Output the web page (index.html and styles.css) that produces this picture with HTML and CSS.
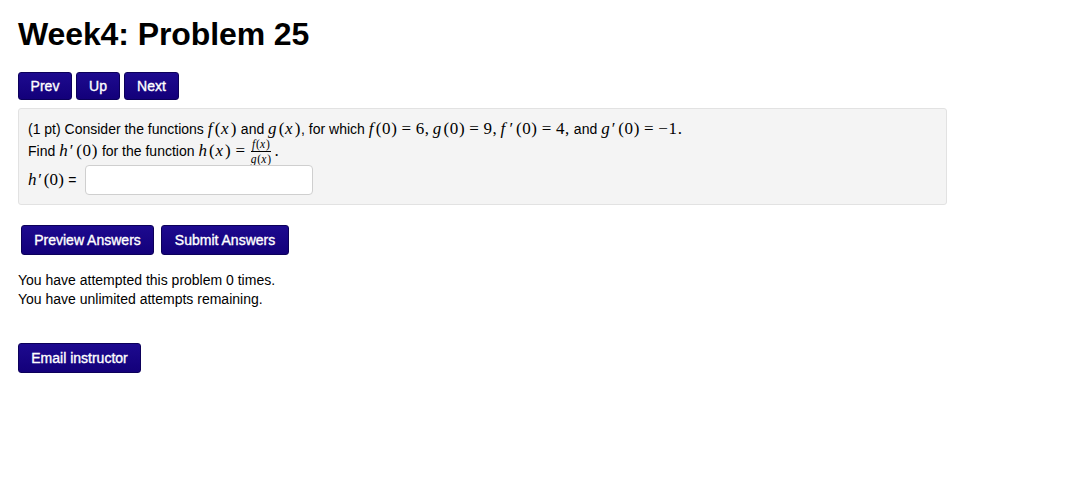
FILE: index.html
```html
<!DOCTYPE html>
<html>
<head>
<meta charset="utf-8">
<link rel="stylesheet" href="styles.css">
</head>
<body>
<div class="page">
  <h1 class="title">Week4: Problem 25</h1>
  <div class="nav">
    <a class="btn">Prev</a>
    <a class="btn">Up</a>
    <a class="btn">Next</a>
  </div>
  <div class="problem">
    <div class="line">(1 pt) Consider the functions <span class="m"><i>f</i>(<i>x</i>)</span> and <span class="m"><i>g</i>(<i>x</i>)</span>, for which <span class="m"><i>f</i>(0)<span class="rel">=</span>6,<span class="sp"></span><i>g</i>(0)<span class="rel">=</span>9,<span class="sp"></span><i>f</i>&#8202;′&#8202;(0)<span class="rel">=</span>4,</span> and <span class="m"><i>g</i>′&#8202;(0)<span class="rel">=</span>−1.</span></div>
    <div class="line">Find <span class="m"><i>h</i>′&#8202;(0)</span> for the function <span class="m"><i>h</i>(<i>x</i>)<span class="rel">=</span><span class="frac"><span class="num"><i>f</i>(<i>x</i>)</span><span class="den"><i>g</i>(<i>x</i>)</span></span>.</span></div>
    <div class="answer"><span class="m am"><i>h</i>′&#8202;(0)</span><span class="eq">=</span><span class="input"></span></div>
  </div>
  <div class="actions">
    <a class="btn btn-lg">Preview Answers</a>
    <a class="btn btn-lg">Submit Answers</a>
  </div>
  <div class="attempts">
    <div>You have attempted this problem 0 times.</div>
    <div>You have unlimited attempts remaining.</div>
  </div>
  <div class="email">
    <a class="btn btn-lg">Email instructor</a>
  </div>
</div>
</body>
</html>
```
FILE: styles.css
```css
html, body {
  margin: 0;
  padding: 0;
  background: #fff;
}
.page {
  padding: 0 18px;
  font-family: "Liberation Sans", Arial, sans-serif;
  font-size: 14px;
  color: #000;
}
.title {
  margin: 0;
  padding-top: 15px;
  font-size: 32px;
  line-height: 38px;
  font-weight: bold;
  letter-spacing: -0.1px;
}
.nav {
  display: flex;
  gap: 4px;
  margin-top: 19px;
}
.btn {
  display: inline-flex;
  align-items: center;
  justify-content: center;
  box-sizing: border-box;
  height: 28px;
  padding: 0 11px;
  font-size: 14px;
  color: #fff;
  -webkit-text-stroke: 0.35px #fff;
  background: linear-gradient(#1d0a8f, #13007a);
  border: 1px solid #0c005a;
  border-radius: 3px;
  text-decoration: none;
}
.nav .btn:nth-child(1) { width: 54px; }
.nav .btn:nth-child(2) { width: 44px; }
.nav .btn:nth-child(3) { width: 55px; }
.problem {
  box-sizing: border-box;
  width: 929px;
  margin-top: 8px;
  height: 97px;
  padding: 9px 9px 0 9px;
  background: #f4f4f4;
  border: 1px solid #e2e2e2;
  border-radius: 3px;
}
.line {
  line-height: 22px;
  white-space: nowrap;
}
.m {
  font-family: "Liberation Serif", "Times New Roman", serif;
  font-size: 17px;
  letter-spacing: 0.65px;
}
.m i {
  font-style: italic;
  margin-right: 1.5px;
}
.am {
  letter-spacing: 0.2px;
}
.rel {
  margin: 0 4px;
}
.sp {
  display: inline-block;
  width: 3px;
}
.frac {
  display: inline-flex;
  flex-direction: column;
  align-items: center;
  vertical-align: 8px;
  font-size: 11.5px;
  line-height: 12px;
  letter-spacing: 0.3px;
  margin: -12px 3px -20px 1px;
}
.frac i {
  margin-right: 0.5px;
}
.num {
  border-bottom: 1px solid #000;
  padding: 0 1px 1px;
}
.den {
  padding-top: 1px;
}
.answer {
  display: flex;
  align-items: center;
  height: 30px;
  margin-top: 3px;
}
.eq {
  margin-left: 4px;
}
.input {
  display: inline-block;
  box-sizing: border-box;
  width: 228px;
  height: 30px;
  margin-left: 9px;
  background: #fff;
  border: 1px solid #cfcfcf;
  border-radius: 4px;
}
.actions {
  display: flex;
  gap: 7px;
  margin-top: 20px;
  padding-left: 3px;
}
.btn-lg {
  height: 30px;
  padding: 0 12px;
}
.actions .btn:nth-child(1) { width: 133px; }
.actions .btn:nth-child(2) { width: 128px; }
.attempts {
  margin-top: 16px;
  line-height: 19px;
}
.email {
  margin-top: 34px;
  display: flex;
}
.email .btn { width: 123px; height: 30px; }
```
